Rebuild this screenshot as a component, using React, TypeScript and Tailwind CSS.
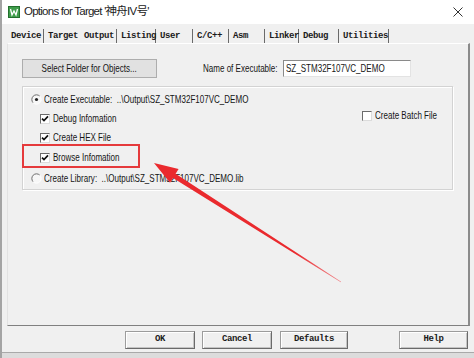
import React from "react";

const ui = "font-['Liberation_Sans',sans-serif] text-[11px] text-[#151515]";
const mono = "font-['Liberation_Mono',monospace] font-bold text-[9px] tracking-[-0.4px] text-[#1b1b1b]";
// the dialog text in the shot is narrower than any installed face
const cond = "inline-block whitespace-nowrap origin-left scale-x-[0.73]";
const condCenter = "inline-block whitespace-nowrap origin-center scale-x-[0.73]";

const tabs = [
  { label: "Device", w: "w-[37px]", sep: true },
  { label: "Target", w: "w-[35px]", sep: false },
  { label: "Output", w: "w-[38px]", sep: true, active: true },
  { label: "Listing", w: "w-[39px]", sep: true },
  { label: "User", w: "w-[37px]", sep: true },
  { label: "C/C++", w: "w-[36px]", sep: true },
  { label: "Asm", w: "w-[36px]", sep: true },
  { label: "Linker", w: "w-[34px]", sep: true },
  { label: "Debug", w: "w-[40px]", sep: true },
  { label: "Utilities", w: "w-[50px]", sep: true },
];

function Check({ checked }: { checked: boolean }) {
  return (
    <span className="w-[10px] h-[10px] shrink-0 bg-white border border-t-[#6b6b6b] border-l-[#6b6b6b] border-r-[#dcdcdc] border-b-[#dcdcdc] flex items-center justify-center">
      {checked && (
        <svg width="8" height="8" viewBox="0 0 8 8">
          <path d="M1 3.6 L3 5.6 L7 1.4" stroke="#111" strokeWidth="1.7" fill="none" />
        </svg>
      )}
    </span>
  );
}

function Radio({ checked }: { checked: boolean }) {
  return (
    <svg width="11" height="11" viewBox="0 0 11 11" className="shrink-0">
      <circle cx="5.5" cy="5.5" r="4.6" fill="#f7f7f7" />
      <path d="M2.2 8.8 A4.6 4.6 0 0 1 8.8 2.2" stroke="#6d6d6d" strokeWidth="1" fill="none" />
      <path d="M8.8 2.2 A4.6 4.6 0 0 1 2.2 8.8" stroke="#ffffff" strokeWidth="1" fill="none" />
      {checked && <circle cx="5.5" cy="5.5" r="1.6" fill="#222" />}
    </svg>
  );
}

function DlgButton({ label, w, ml }: { label: string; w: string; ml: string }) {
  return (
    <div
      className={`${w} ${ml} h-[18px] flex items-center justify-center bg-[#f0f0f0] border border-[#9c9c9c] border-r-[#6a6a6a] border-b-[#6a6a6a] shadow-[inset_1px_1px_0_#ffffff,inset_-1px_-1px_0_#c4c4c4] ${mono}`}
    >
      {label}
    </div>
  );
}

export default function App() {
  return (
    <div className="w-[474px] h-[358px] bg-[#f0f0f0] border-l-2 border-l-[#a4a4a4] flex flex-col relative overflow-hidden">
      {/* title bar */}
      <div className="h-[24px] bg-white flex items-center pl-[6px] pr-[11px] shrink-0">
        <svg width="12" height="12" viewBox="0 0 12 12">
          <rect x="0.5" y="0.5" width="11" height="11" fill="#3f9d4b" stroke="#23702e" />
          <path d="M2.5 3 L4 9 L6 5 L8 9 L9.5 3" stroke="#ffffff" strokeWidth="1.3" fill="none" />
        </svg>
        <span className="ml-[4px] font-['Liberation_Sans','Noto_Sans_CJK_SC',sans-serif] text-[11.5px] tracking-[-0.75px] text-[#222]">
          Options for Target '神舟IV号'
        </span>
        <svg width="10" height="10" viewBox="0 0 10 10" className="ml-auto">
          <path d="M0.5 0.5 L9.5 9.5 M9.5 0.5 L0.5 9.5" stroke="#333" strokeWidth="1" />
        </svg>
      </div>

      {/* tabs */}
      <div className="flex mt-[5px] ml-[5px] h-[14px] shrink-0">
        {tabs.map((t) => (
          <div
            key={t.label}
            className={`${t.w} h-[14px] flex ${mono} ${t.sep ? "border-r border-r-[#6a6a6a]" : ""} ${t.active ? "items-start pt-px pl-[5px]" : "items-center pt-[2px] pl-[4px]"}`}
          >
            {t.label}
          </div>
        ))}
      </div>

      {/* panel */}
      <div className="ml-[5px] mr-[4px] h-[283px] shrink-0 border-t border-t-white border-l border-l-[#e2e2e2] border-r-2 border-r-[#8b8b8b] border-b border-b-[#808080] pl-[14px] pt-[15px]">
        <div className="flex items-center h-[19px]">
          <div className={`w-[135px] h-[19px] flex items-center justify-center bg-[#e1e1e1] border border-[#adadad] ${ui}`}>
            <span className={condCenter}>Select Folder for Objects...</span>
          </div>
          <div className={`ml-[46px] w-[80px] ${ui}`}>
            <span className={cond}>Name of Executable:</span>
          </div>
          <div className={`w-[128px] h-[17px] bg-white border border-[#8a8a8a] border-b-[#e3e3e3] border-r-[#e3e3e3] flex items-center pl-[2px] overflow-hidden ${ui}`}>
            <span className={cond}>SZ_STM32F107VC_DEMO</span>
          </div>
        </div>

        {/* group */}
        <div className="mt-[8px] w-[431px] h-[104px] border border-[#d3d3d3] shadow-[inset_1px_1px_0_#ffffff,1px_1px_0_#ffffff] flex justify-between pt-[3px]">
          <div className="flex flex-col">
            <div className={`h-[19px] flex items-center pl-[8px] gap-[2px] ${ui}`}>
              <Radio checked />
              <span className={cond}>Create Executable:&nbsp; ..\Output\SZ_STM32F107VC_DEMO</span>
            </div>
            <div className={`h-[19px] flex items-center pl-[17px] gap-[3px] ${ui}`}>
              <Check checked />
              <span className={cond}>Debug Infomation</span>
            </div>
            <div className={`h-[19px] flex items-center pl-[17px] gap-[3px] ${ui}`}>
              <Check checked />
              <span className={cond}>Create HEX File</span>
            </div>
            <div className={`mt-px h-[19px] flex items-center pl-[17px] gap-[3px] ${ui}`}>
              <Check checked />
              <span className={cond}>Browse Infomation</span>
            </div>
            <div className={`mt-[2px] h-[19px] flex items-center pl-[8px] gap-[2px] ${ui}`}>
              <Radio checked={false} />
              <span className={cond}>Create Library:&nbsp; ..\Output\SZ_STM32F107VC_DEMO.lib</span>
            </div>
          </div>
          <div className="w-[90px] shrink-0 pt-[16px]">
            <div className={`h-[19px] flex items-center gap-[3px] ${ui}`}>
              <Check checked={false} />
              <span className={cond}>Create Batch File</span>
            </div>
          </div>
        </div>
      </div>

      {/* buttons */}
      <div className="flex mt-[5px] pl-[123px] shrink-0">
        <DlgButton label="OK" w="w-[70px]" ml="ml-0" />
        <DlgButton label="Cancel" w="w-[70px]" ml="ml-[7px]" />
        <DlgButton label="Defaults" w="w-[68px]" ml="ml-[8px]" />
        <DlgButton label="Help" w="w-[69px]" ml="ml-[51px]" />
      </div>

      <div className="mt-auto h-[6px] border-t border-t-[#a9a9a9] bg-[#dcdcdc] shrink-0" />

      {/* red annotation */}
      <div className="absolute left-[20px] top-[144px] w-[118px] h-[24px] border-2 border-[#e53a3c]" />
      <svg className="absolute left-0 top-0 pointer-events-none" width="474" height="358" viewBox="0 0 474 358">
        <defs>
          <linearGradient id="arr" x1="152" y1="163" x2="339" y2="282" gradientUnits="userSpaceOnUse">
            <stop offset="0" stopColor="#ea2a2e" />
            <stop offset="0.75" stopColor="#ea2a2e" />
            <stop offset="1" stopColor="#f08a8e" />
          </linearGradient>
        </defs>
        <polygon
          points="152,163 176.6,169.1 173.6,173.8 339.2,281.7 338.8,282.3 171,178 168,182.7"
          fill="url(#arr)"
        />
      </svg>
    </div>
  );
}
